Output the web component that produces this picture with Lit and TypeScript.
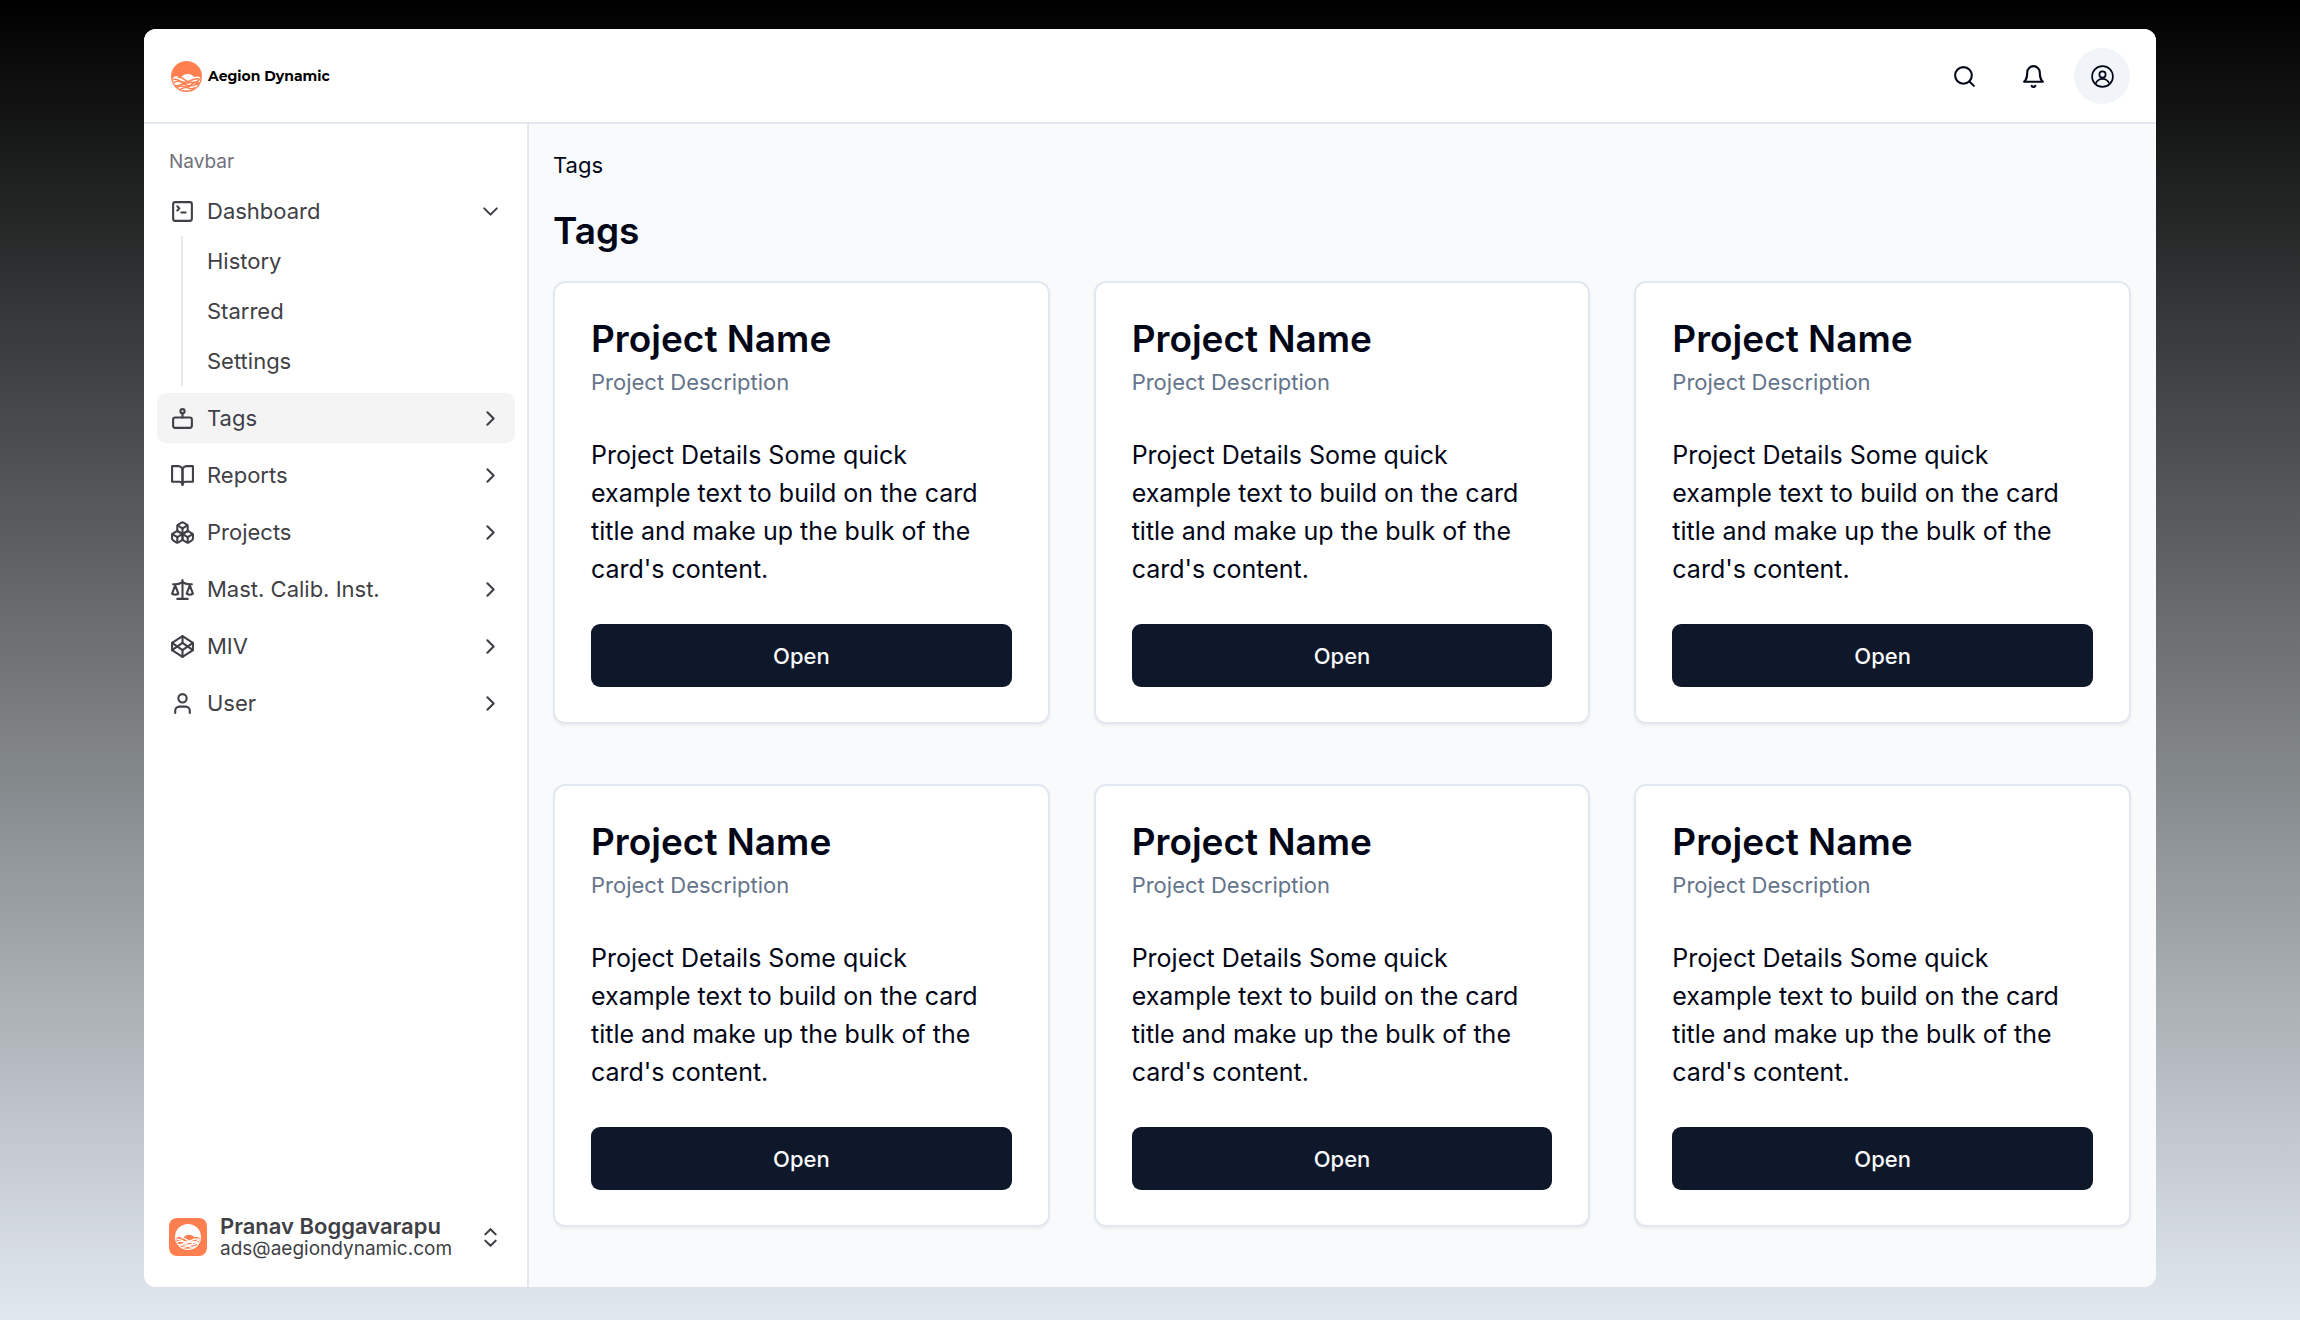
import { LitElement, html, css, svg } from "lit";
import { customElement, property } from "lit/decorators.js";

const icons: Record<string, unknown> = {
  terminal: svg`<path d="m7 11 2-2-2-2"/><path d="M11 13h4"/><rect width="18" height="18" x="3" y="3" rx="2"/>`,
  bot: svg`<rect x="3" y="11" width="18" height="10" rx="2"/><circle cx="12" cy="5" r="2"/><path d="M12 7v4"/>`,
  book: svg`<path d="M2 3h6a4 4 0 0 1 4 4v14a3 3 0 0 0-3-3H2z"/><path d="M22 3h-6a4 4 0 0 0-4 4v14a3 3 0 0 1 3-3h7z"/>`,
  boxes: svg`<path d="M2.97 12.92A2 2 0 0 0 2 14.63v3.24a2 2 0 0 0 .97 1.71l3 1.8a2 2 0 0 0 2.06 0L12 19v-5.5l-5-3-4.03 2.42Z"/><path d="m7 16.5-4.74-2.85"/><path d="m7 16.5 5-3"/><path d="M7 16.5v5.17"/><path d="M12 13.5V19l3.97 2.38a2 2 0 0 0 2.06 0l3-1.8a2 2 0 0 0 .97-1.71v-3.24a2 2 0 0 0-.97-1.71L17 10.5l-5 3Z"/><path d="m17 16.5-5-3"/><path d="m17 16.5 4.74-2.85"/><path d="M17 16.5v5.17"/><path d="M7.97 4.42A2 2 0 0 0 7 6.13v4.37l5 3 5-3V6.13a2 2 0 0 0-.97-1.71l-3-1.8a2 2 0 0 0-2.06 0l-3 1.8Z"/><path d="M12 8 7.26 5.15"/><path d="m12 8 4.74-2.85"/><path d="M12 13.5V8"/>`,
  scale: svg`<path d="m16 16 3-8 3 8c-.87.65-1.92 1-3 1s-2.13-.35-3-1Z"/><path d="m2 16 3-8 3 8c-.87.65-1.92 1-3 1s-2.13-.35-3-1Z"/><path d="M7 21h10"/><path d="M12 3v18"/><path d="M3 7h2c2 0 5-1 7-2 2 1 5 2 7 2h2"/>`,
  codepen: svg`<polygon points="12 2 22 8.5 22 15.5 12 22 2 15.5 2 8.5 12 2"/><path d="M12 22v-6.5"/><polyline points="22 8.5 12 15.5 2 8.5"/><polyline points="2 15.5 12 8.5 22 15.5"/><path d="M12 2v6.5"/>`,
  user: svg`<path d="M19 21v-2a4 4 0 0 0-4-4H9a4 4 0 0 0-4 4v2"/><circle cx="12" cy="7" r="4"/>`,
  down: svg`<path d="m6 9 6 6 6-6"/>`,
  right: svg`<path d="m9 18 6-6-6-6"/>`,
  updown: svg`<path d="m7 15 5 5 5-5"/><path d="m7 9 5-5 5 5"/>`,
  search: svg`<circle cx="11" cy="11" r="8"/><path d="m21 21-4.3-4.3"/>`,
  bell: svg`<path d="M6 8a6 6 0 0 1 12 0c0 7 3 9 3 9H3s3-2 3-9"/><path d="M10.3 21a1.94 1.94 0 0 0 3.4 0"/>`,
  account: svg`<g stroke-width="1.6"><circle cx="12" cy="12" r="10"/><circle cx="12" cy="10" r="3"/><path d="M5.3 19C6.6 16 9 14.2 12 14.2S17.4 16 18.7 19"/></g>`,
};

const icon = (name: string) => svg`<svg class="icon" viewBox="0 0 24 24" aria-hidden="true">${icons[name]}</svg>`;

/* Round mark: a solid disc whose lower half is cut by layered waves. */
const mark = (disc: string, line: string) => html`<svg class="mark" viewBox="0 0 32 32" aria-hidden="true">
  <circle cx="16" cy="16" r="16" fill=${disc} />
  <path d="M1.5 18C4 15 7 15.5 10 17C14 12 21 12.5 24 16.5C26 15.6 28.5 15.8 30.5 17C30 25 24 30.5 16 30.5C8 30.5 2 25 1.5 18Z" fill=${line} />
  <g fill="none" stroke=${disc} stroke-width="1.5">
    <path d="M7 17C11 15.500 14 20 18 21.500S27 22 30 18.500" />
    <path d="M2 19.500C6 17 9 22 14 22S21 17.500 29.500 18.500" />
    <path d="M2.500 22.500C7 19.500 10 21 13 23.500S24 27 29 22" />
    <path d="M3.500 25C8 27 10 23.500 15 23S23 20.500 29 23.500" />
    <path d="M6 27.500C10 24 14 26 17 27.500S23 29 25 27" />
    <path d="M9 29.500C13 26.500 18 28.500 21 24.500S26 23 28 25" />
  </g>
</svg>`;

const sections = [
  { icon: "terminal", label: "Dashboard", children: ["History", "Starred", "Settings"] },
  { icon: "bot", label: "Tags", active: true },
  { icon: "book", label: "Reports" },
  { icon: "boxes", label: "Projects" },
  { icon: "scale", label: "Mast. Calib. Inst." },
  { icon: "codepen", label: "MIV" },
  { icon: "user", label: "User" },
];

const base = css`
  * { box-sizing: border-box; margin: 0; }
  button { font: inherit; color: inherit; border: 0; background: none; padding: 0; cursor: pointer; text-align: left; }
  a { color: inherit; text-decoration: none; }
  ul { list-style: none; padding: 0; }
  .icon { display: block; flex: none; width: 25px; height: 25px; fill: none; stroke: currentColor; stroke-width: 2; stroke-linecap: round; stroke-linejoin: round; }
  .mark { display: block; flex: none; }
`;

@customElement("app-header")
export class AppHeader extends LitElement {
  static styles = [base, css`
    :host { display: flex; align-items: center; justify-content: space-between; padding: 19px 26px 18px 27px; border-bottom: 2px solid #e2e8f0; background: #fff; color: #020617; }
    .brand { display: flex; align-items: center; gap: 6px; font: 700 14px/24px "Montserrat", Inter, sans-serif; color: #000; }
    .brand .mark { width: 31px; height: 31px; }
    .actions { display: flex; gap: 13px; }
    .action { display: grid; place-items: center; width: 56px; height: 56px; border-radius: 50%; }
    .filled { background: #f1f5f9; }
  `];
  render() {
    return html`
      <a class="brand" href="#">${mark("#ff7f50", "#fff")}<span>Aegion Dynamic</span></a>
      <div class="actions">
        <button class="action" aria-label="Search">${icon("search")}</button>
        <button class="action" aria-label="Notifications">${icon("bell")}</button>
        <button class="action filled" aria-label="Account">${icon("account")}</button>
      </div>`;
  }
}

@customElement("app-sidebar")
export class AppSidebar extends LitElement {
  static styles = [base, css`
    :host { display: flex; flex-direction: column; justify-content: space-between; width: 385px; flex: none; padding: 12px 12px 12px 13px; background: #fff; border-right: 2px solid #e5e7eb; color: #3f3f46; font-size: 22px; line-height: 31px; }
    .heading { display: flex; align-items: center; height: 50px; padding: 0 12px; font-size: 19px; font-weight: 400; color: #71717a; }
    .menu { display: flex; flex-direction: column; gap: 7px; }
    .item { display: flex; align-items: center; gap: 12px; width: 100%; height: 50px; padding: 0 12px 0 13px; border-radius: 9px; }
    .label { flex: 1; }
    .active { background: #f4f4f5; }
    .children { margin-left: 24px; padding-left: 12px; border-left: 2px solid #e5e7eb; }
    .child { display: flex; align-items: center; height: 50px; padding: 0 12px; }
    .person { display: flex; align-items: center; gap: 13px; width: 100%; height: 76px; padding: 0 12px; }
    .avatar { display: grid; place-items: center; width: 38px; height: 38px; border-radius: 8px; background: #ff7f50; }
    .avatar .mark { width: 26px; height: 26px; }
    .who { flex: 1; display: grid; }
    .name { font-weight: 600; line-height: 24px; }
    .mail { font-size: 19px; line-height: 22px; }
  `];
  render() {
    return html`
      <nav aria-label="Navbar">
        <h2 class="heading">Navbar</h2>
        <ul class="menu">
          ${sections.map((s) => html`<li>
            <button class="item ${s.active ? "active" : ""}" aria-expanded=${s.children ? "true" : "false"}>
              ${icon(s.icon)}<span class="label">${s.label}</span>${icon(s.children ? "down" : "right")}
            </button>
            ${s.children ? html`<ul class="children">${s.children.map((c) => html`<li><a class="child" href="#">${c}</a></li>`)}</ul>` : ""}
          </li>`)}
        </ul>
      </nav>
      <button class="person">
        <span class="avatar">${mark("#fff", "#ff7f50")}</span>
        <span class="who"><span class="name">Pranav Boggavarapu</span><span class="mail">ads@aegiondynamic.com</span></span>
        ${icon("updown")}
      </button>`;
  }
}

@customElement("project-card")
export class ProjectCard extends LitElement {
  @property() name = "";
  @property() description = "";
  @property() details = "";
  static styles = [base, css`
    :host { display: flex; flex-direction: column; padding: 35px 36px; border: 2px solid #e2e8f0; border-radius: 12px; background: #fff; box-shadow: 0 2px 3px rgb(0 0 0 / 5%); }
    .title { font-size: 37px; line-height: 42px; font-weight: 600; }
    .description { margin-top: 7px; font-size: 22px; line-height: 31px; color: #64748b; }
    .details { margin-top: 38px; font-size: 25px; line-height: 38px; }
    .open { margin-top: 36px; height: 63px; border-radius: 9px; background: #0f172a; color: #f8fafc; font-size: 22px; font-weight: 500; text-align: center; }
  `];
  render() {
    return html`
      <h2 class="title">${this.name}</h2>
      <p class="description">${this.description}</p>
      <p class="details">${this.details}</p>
      <button class="open">Open</button>`;
  }
}

@customElement("app-root")
export class AppRoot extends LitElement {
  static styles = [base, css`
    :host { display: flex; min-height: 100vh; box-sizing: border-box; padding: 29px 144px 33px; background: linear-gradient(#000, #707476 50%, #e2e8f0); font-family: Inter, "Liberation Sans", sans-serif; color: #020617; }
    .window { flex: 1; display: flex; flex-direction: column; border-radius: 12px; overflow: hidden; background: #f8fafc; }
    .body { flex: 1; display: flex; }
    .main { flex: 1; min-width: 0; padding: 24px 25px 24px 24px; }
    .crumb { font-size: 22px; line-height: 34px; }
    .heading { margin: 27px 0 28px; font-size: 37px; line-height: 44px; font-weight: 600; }
    .grid { display: grid; grid-template-columns: repeat(3, minmax(0, 1fr)); gap: 60px 44px; }
  `];
  render() {
    return html`<div class="window">
      <app-header></app-header>
      <div class="body">
        <app-sidebar></app-sidebar>
        <main class="main">
          <p class="crumb">Tags</p>
          <h1 class="heading">Tags</h1>
          <div class="grid">
            ${Array.from({ length: 6 }, () => html`<project-card name="Project Name" description="Project Description"
              details="Project Details Some quick example text to build on the card title and make up the bulk of the card's content."></project-card>`)}
          </div>
        </main>
      </div>
    </div>`;
  }
}
